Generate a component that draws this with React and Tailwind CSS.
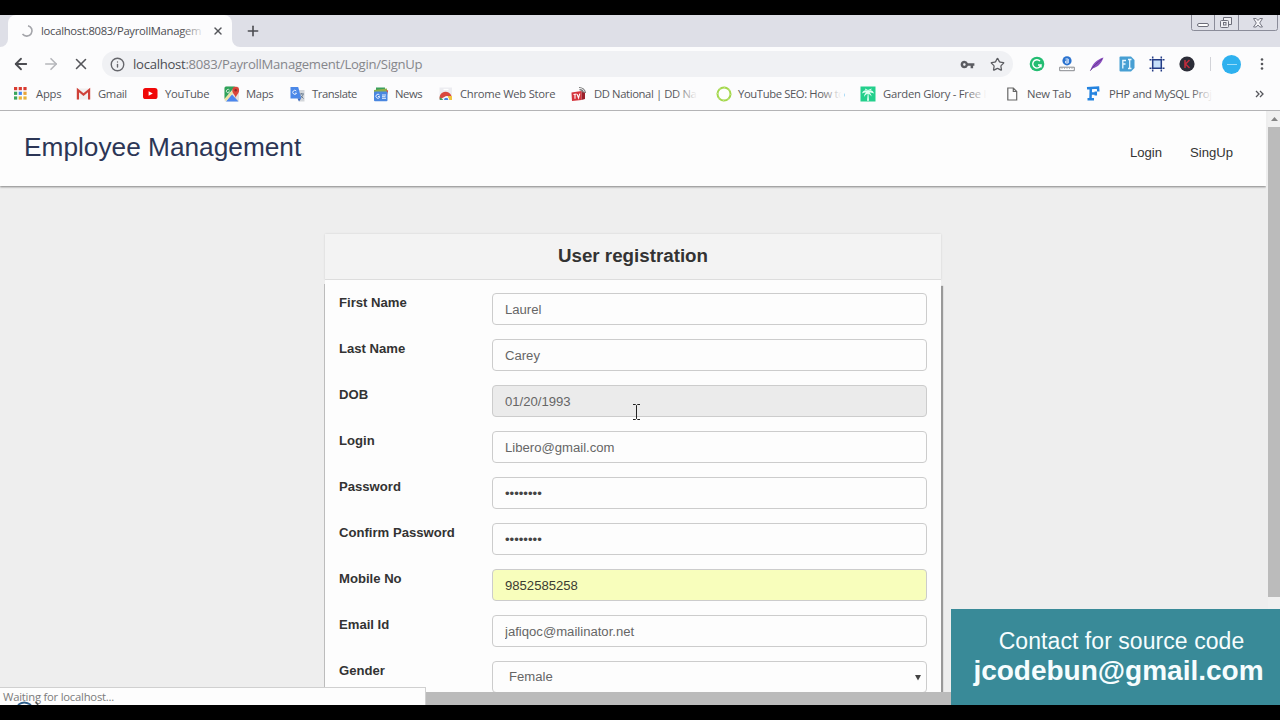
import { ArrowLeft, ArrowRight, X, Plus, Info, Star } from 'lucide-react'
import { MdVpnKey } from 'react-icons/md'

const fields = [
  { label: 'First Name', value: 'Laurel' },
  { label: 'Last Name', value: 'Carey' },
  { label: 'DOB', value: '01/20/1993', tone: 'bg-[#ebebeb] text-[#666]' },
  { label: 'Login', value: 'Libero@gmail.com' },
  { label: 'Password', value: 'libero12', type: 'password', tone: 'bg-[#fdfdfd] text-[#444]' },
  { label: 'Confirm Password', value: 'libero12', type: 'password', tone: 'bg-[#fdfdfd] text-[#444]' },
  { label: 'Mobile No', value: '9852585258', tone: 'bg-[#f8febc] text-[#3c3c32]' },
  { label: 'Email Id', value: 'jafiqoc@mailinator.net' },
]

const appColors = ['#d93b30', '#d93b30', '#d93b30', '#3ba55c', '#4285f4', '#e8a33a', '#3ba55c', '#e8b23a', '#e8b23a']

function AppsIcon() {
  return (
    <svg width="15" height="15" viewBox="0 0 15 15">
      {appColors.map((c, i) => (
        <rect key={i} x={1 + (i % 3) * 4.7} y={1 + Math.floor(i / 3) * 4.7} width="3.2" height="3.2" fill={c} />
      ))}
    </svg>
  )
}

function GmailIcon() {
  return (
    <svg width="15" height="15" viewBox="0 0 15 15">
      <path d="M1 2.5h13v11H1z" fill="#f1efef" />
      <path d="M1.9 13.5V4l5.6 4.6L13.1 4v9.5" fill="none" stroke="#cf4139" strokeWidth="2.2" />
    </svg>
  )
}

function YouTubeIcon() {
  return (
    <svg width="15" height="15" viewBox="0 0 15 15">
      <rect x="0" y="2" width="14.5" height="11" rx="2.6" fill="#f00808" />
      <path d="M5.6 5.2l4.2 2.3-4.2 2.3z" fill="#fff" />
    </svg>
  )
}

function MapsIcon() {
  return (
    <svg width="16" height="16" viewBox="0 0 16 16">
      <rect x="0.5" y="0.5" width="14.5" height="15" rx="1.5" fill="#e4e2dc" />
      <path d="M.5 2A1.5 1.5 0 0 1 2 .5h9L.5 13z" fill="#2fa35a" />
      <path d="M2 15.5L8 8.500l6.500 7z" fill="#4b86ee" />
      <path d="M.5 13L9 4l1.300 1.500L2 15z" fill="#f0e3a0" />
      <path d="M11.700 12C11.500 9 8.300 7.500 8.300 4.200a3.400 3.400 0 0 1 6.800 0C15.100 7.500 12 9 11.700 12z" fill="#d9443a" />
      <circle cx="11.700" cy="4.200" r="1.200" fill="#8c2c25" />
      <path d="M5.500 4.200A1.700 1.700 0 1 0 5.500 6H4" fill="none" stroke="#e9f5ec" strokeWidth=".8" />
    </svg>
  )
}

function TranslateIcon() {
  return (
    <svg width="16" height="16" viewBox="0 0 16 16">
      <path d="M6 4h8.500v11.500H9z" fill="#d3d6da" />
      <path d="M9.500 8h4.500M11.700 7v1M13 8.500c-.5 2-1.800 3-3 3.700M10.500 9.500l3 3" stroke="#6b7d91" strokeWidth="1" fill="none" />
      <path d="M.5 1h7.700l3 11.500H.5z" fill="#4b88e8" />
      <path d="M6.300 5A2 2 0 1 0 6.600 7.200H5" fill="none" stroke="#e8f0fd" strokeWidth="1" />
      <path d="M7.500 12.500H11l-2 3z" fill="#3466c0" />
    </svg>
  )
}

function NewsIcon() {
  return (
    <svg width="16" height="16" viewBox="0 0 16 16">
      <path d="M3 1.500h9v4H3z" fill="#39a05b" />
      <path d="M1 4l13-1.500V7H1z" fill="#8fae4c" />
      <path d="M13.500 4l1.700.5L14 9z" fill="#d9443a" />
      <rect x="1" y="5.500" width="13.500" height="9.700" rx="1" fill="#4a86e0" />
      <path d="M6.500 9A2 2 0 1 0 6.500 11.500V10.500H5M9 9h4M9 10.700h3.500M9 12.300h4" fill="none" stroke="#e6effc" strokeWidth="1" />
    </svg>
  )
}

function WebStoreIcon() {
  return (
    <svg width="15" height="15" viewBox="0 0 15 15">
      <path d="M.5 1.500h12.500V14H.5z" fill="#ececf0" />
      <path d="M4.500 3.500h5" stroke="#fff" strokeWidth="1.300" />
      <path d="M.8 13.500a6 6 0 0 1 11.700-3.500H7z" fill="#d9483e" />
      <path d="M.8 11L4.500 14H.8z" fill="#45a35d" />
      <path d="M9 10h4v4H8.500z" fill="#efc441" />
      <path d="M4.200 14a3 3 0 1 1 6 0z" fill="#fff" />
      <path d="M5 14a2.200 2.200 0 1 1 4.400 0z" fill="#4b83df" />
    </svg>
  )
}

function DDIcon() {
  return (
    <svg width="16" height="16" viewBox="0 0 16 16">
      <path d="M.5 6.500l10-1.500v9L1 15z" fill="#d5343c" />
      <path d="M10.500 5l3.500 1.500V13l-3.500 1z" fill="#991f2a" />
      <path d="M2.500 8.500l3-.4M4 8.400v4.300M6.200 8.200l1.300 3.700 1.300-4.200" stroke="#fff" strokeWidth="1.100" fill="none" />
      <path d="M8 1.500a6.500 6.500 0 0 1 6.500 5.500M8.500 3.600a4 4 0 0 1 4 3" stroke="#777" strokeWidth="1.200" fill="none" />
    </svg>
  )
}

function SeoIcon() {
  return (
    <svg width="16" height="16" viewBox="0 0 16 16">
      <circle cx="8" cy="8" r="6.500" fill="#fefefe" stroke="#a4d84c" strokeWidth="2" />
      <circle cx="8" cy="8" r="6.500" fill="none" stroke="#c4e48c" strokeWidth="2" strokeDasharray="1 4" />
    </svg>
  )
}

function PalmIcon() {
  return (
    <svg width="16" height="16" viewBox="0 0 16 16">
      <rect x="0.5" y="0.5" width="15" height="15" fill="#23cf8c" />
      <path d="M2 7.500C3 4 6 3.500 8 5c2-1.500 5-1 6 2.500-2-1-3-1-4.500-1 1 1 2 2 2 4-1-1.500-2-2.300-3-2.700l.5 7h-2l.7-7C6 8.500 5 9.300 4 11c0-2 .7-3.200 2-4.500-1.500 0-2.500 0-4 1z" fill="#e4fff3" />
      <path d="M5 3l3 1.500L11.500 3" stroke="#e4fff3" strokeWidth="1" fill="none" />
    </svg>
  )
}

function PageIcon() {
  return (
    <svg width="12" height="14" viewBox="0 0 12 14">
      <path d="M.8 1h5.500l3.400 3.500V13H.8zM6.300 1v3.500h3.400" fill="none" stroke="#666" strokeWidth="1.200" />
    </svg>
  )
}

function FreeIcon() {
  return (
    <svg width="14" height="15" viewBox="0 0 14 15">
      <path d="M1 2.300L12 1.500l.3 4M4.800 2.200L4.500 13M1.500 13.200h6.500M5.500 7.500h4.500M9.800 5.500v4" stroke="#2483df" strokeWidth="2.500" fill="none" />
    </svg>
  )
}

const bookmarks = [
  { title: 'Apps', icon: AppsIcon, box: 'w-[63px]', gap: 'w-[23px]', font: 'tracking-[-0.2px]' },
  { title: 'Gmail', icon: GmailIcon, box: 'w-[67px]', gap: 'w-[22px]', font: 'tracking-[-0.35px]' },
  { title: 'YouTube', icon: YouTubeIcon, box: 'w-[81px]', gap: 'w-[22px]', font: 'tracking-[-0.3px]' },
  { title: 'Maps', icon: MapsIcon, box: 'w-[66px]', gap: 'w-[22px]', font: 'tracking-[-0.3px]' },
  { title: 'Translate', icon: TranslateIcon, box: 'w-[83px]', gap: 'w-[22px]', font: 'tracking-[-0.42px]' },
  { title: 'News', icon: NewsIcon, box: 'w-[66px]', gap: 'w-[22px]', font: 'tracking-[-0.4px]' },
  { title: 'Chrome Web Store', icon: WebStoreIcon, box: 'w-[132px]', gap: 'w-[21px]', font: 'tracking-[-0.26px]' },
  { title: 'DD National | DD Na', icon: DDIcon, box: 'w-[145px]', gap: 'w-[23px]', font: 'tracking-[-0.38px]', fade: true },
  { title: 'YouTube SEO: How to', icon: SeoIcon, box: 'w-[144px]', gap: 'w-[22px]', font: 'tracking-[-0.38px]', fade: true },
  { title: 'Garden Glory - Free I', icon: PalmIcon, box: 'w-[147px]', gap: 'w-[23px]', font: 'tracking-[-0.25px]', fade: true },
  { title: 'New Tab', icon: PageIcon, box: 'w-[79px]', gap: 'w-5', font: 'tracking-[-0.25px]' },
  { title: 'PHP and MySQL Proj', icon: FreeIcon, box: 'w-[149px]', gap: 'w-[23px]', font: 'tracking-[-0.3px]', fade: true },
]

function Bookmark({ item }) {
  const Icon = item.icon
  return (
    <div className={`flex h-full shrink-0 items-center ${item.box}`}>
      <div className={`shrink-0 ${item.gap}`}>
        <Icon />
      </div>
      <div className={`relative pt-px whitespace-nowrap ${item.font} ${item.fade ? 'w-[106px]' : ''}`}>
        {item.title}
        {item.fade && (
          <span className="absolute inset-y-0 right-0 w-6 bg-linear-to-r from-transparent to-[#fcfcfd] to-90%" />
        )}
      </div>
    </div>
  )
}

function WindowButtons() {
  return (
    <svg width="89" height="17" viewBox="0 0 89 17" fill="none" stroke="#8b8c99" className="shrink-0">
      <path d="M.5 0v13.500q0 2 2 2h82q2 0 2-2V0M23.500 0v15M47.500 0v15" />
      <rect x="6.500" y="8.500" width="11" height="3" rx="1.500" stroke="#6d6e7a" fill="#fff" />
      <g stroke="#6d6e7a">
        <path d="M32.500 5V2.500h8v7H38" fill="#f0f0f4" />
        <rect x="29.500" y="5.500" width="8" height="7" rx="1" fill="#f0f0f4" />
        <rect x="32.500" y="7.500" width="2.500" height="2.500" />
      </g>
      <path d="M62.500 3.500h2.700l1.800 2 1.800-2h2.700L68.700 8l2.800 4h-2.700L67 10l-1.800 2h-2.700L65.300 8z" stroke="#777884" fill="#f4f4f7" />
    </svg>
  )
}

function TabStrip() {
  return (
    <div className="flex h-8 items-start bg-[#dedfe7]">
      <div className="h-8 w-2 bg-[#fcfcfd]">
        <div className="h-8 rounded-br-lg bg-[#dedfe7]" />
      </div>
      <div className="flex h-8 w-[224px] items-center rounded-t-lg bg-[#fcfcfd] pl-3">
        <svg width="14" height="14" viewBox="0 0 14 14" fill="none" className="mr-[7px] shrink-0">
          <path d="M8 1.700A5.300 5.300 0 1 1 2.500 10" stroke="#a4a5aa" strokeWidth="1.600" />
        </svg>
        <div className="relative w-[164px] whitespace-nowrap text-[11.25px] tracking-[-0.27px] text-[#4c4d52]">
          localhost:8083/PayrollManagem
          <span className="absolute inset-y-0 right-0 w-6 bg-linear-to-r from-transparent to-[#fcfcfd]" />
        </div>
        <X size={12} strokeWidth={2.8} className="ml-[7px] shrink-0 text-[#55565b]" />
      </div>
      <div className="h-8 w-2 bg-[#fcfcfd]">
        <div className="h-8 rounded-bl-lg bg-[#dedfe7]" />
      </div>
      <Plus size={16} strokeWidth={2.4} className="mt-2 ml-[5px] text-[#4b4c51]" />
      <div className="grow" />
      <WindowButtons />
    </div>
  )
}

function Extensions() {
  return (
    <div className="flex items-center">
      <svg width="16" height="16" viewBox="0 0 16 16" className="mr-[14px]">
        <circle cx="8" cy="8" r="7.300" fill="#23bd72" />
        <path d="M11 5A4.200 4.200 0 1 0 12 9H9M12 9v2.500" fill="none" stroke="#fff" strokeWidth="1.400" />
      </svg>
      <svg width="16" height="16" viewBox="0 0 16 16" className="mr-[14px]">
        <circle cx="8" cy="4.800" r="4.600" fill="#2a72ce" />
        <path d="M6.500 3h2.700v4H6.700V5h2.500" fill="none" stroke="#e9f2ff" strokeWidth="1" />
        <path d="M.7 11.200h14.600v3.500H.7z" fill="#fff" stroke="#7b7d82" strokeWidth=".9" />
        <path d="M3 11.500v1.500M5.500 11.500v1.500M8 11.500v1.500M10.500 11.500v1.500M13 11.500v1.500" stroke="#999" strokeWidth=".7" />
      </svg>
      <svg width="16" height="16" viewBox="0 0 16 16" className="mr-[14px]">
        <path d="M1.500 14.500C3 8 8 3.500 14.500 1.500c-1.500 5-5 9.500-11 11z" fill="#8c4fc0" />
        <path d="M1.300 14.700C5 9.500 8 7 13 3" stroke="#5c3489" strokeWidth=".9" fill="none" />
      </svg>
      <svg width="16" height="16" viewBox="0 0 16 16" className="mr-[14px]">
        <path d="M.5 1.500q0-1 1-1H12l3.500 3.500v8L12 15.500H1.500q-1 0-1-1z" fill="#479fd3" />
        <path d="M3.800 12.500V4.500H7M3.800 8H6.500M9 3.500h3.500M10.700 3.500v9M9 12.500h3.500" stroke="#e9f7ff" strokeWidth="1.300" fill="none" />
      </svg>
      <svg width="16" height="16" viewBox="0 0 16 16" className="mr-[14px]">
        <rect x="4" y="4" width="8" height="8" fill="#c6e0fb" />
        <path d="M3.700.5v15M12.300.5v15M.5 3.700h15M.5 12.300h15" stroke="#243c86" strokeWidth="1.500" strokeDasharray="2 .6 9.800 .6 2" fill="none" />
      </svg>
      <svg width="16" height="16" viewBox="0 0 16 16">
        <circle cx="8" cy="8" r="7.600" fill="#2c2d38" />
        <path d="M6 4v8M10.500 4L6.500 8l4 4" stroke="#c42c3c" strokeWidth="1.500" fill="none" />
      </svg>
      <div className="mr-[11px] ml-[15px] h-3.5 w-px bg-[#d2d3d8]" />
      <div className="flex size-[19px] items-center justify-center rounded-full bg-[#2eb1ef]">
        <div className="h-px w-2.5 bg-[#9cdcf9]" />
      </div>
      <svg width="4" height="14" viewBox="0 0 4 14" fill="#55565b" className="ml-[19px]">
        <circle cx="2" cy="2.500" r="1.300" />
        <circle cx="2" cy="7" r="1.300" />
        <circle cx="2" cy="11.500" r="1.300" />
      </svg>
    </div>
  )
}

function Toolbar() {
  return (
    <div className="flex h-[34px] items-center bg-[#fcfcfd] pl-3">
      <ArrowLeft size={18} strokeWidth={2.4} className="text-[#4c4d52]" />
      <ArrowRight size={18} strokeWidth={2.2} className="ml-3 text-[#b5b6bb]" />
      <X size={18} strokeWidth={2.1} className="ml-3 text-[#55565b]" />
      <div className="ml-3 flex h-[26px] w-[911px] items-center rounded-full bg-[#f0f1f4] pl-2">
        <Info size={15} strokeWidth={2.2} className="shrink-0 text-[#66676c]" />
        <div className="ml-2 pt-px text-[13.125px] tracking-[-0.28px] text-[#85868b]">
          <span className="text-[#4c4d52]">localhost</span>:8083/PayrollManagement/Login/SignUp
        </div>
        <div className="grow" />
        <MdVpnKey size={15} className="mr-[15px] text-[#5b5c61]" />
        <Star size={15} strokeWidth={2} className="mr-2 text-[#5b5c61]" />
      </div>
      <div className="w-4" />
      <Extensions />
    </div>
  )
}

function Field({ field }) {
  return (
    <div className="flex h-[46px]">
      <label className="w-[153px] pt-px leading-[18px] font-bold text-[#333]">{field.label}</label>
      <input
        type={field.type || 'text'}
        defaultValue={field.value}
        className={`h-8 w-[435px] rounded-[4px] border border-[#ccc] px-3 outline-none ${field.tone || 'bg-[#fdfdfd] text-[#666]'}`}
      />
    </div>
  )
}

function RegistrationPage() {
  return (
    <div className="flex w-[1266px] flex-col overflow-hidden bg-[#eee] font-['Liberation_Sans',Arial,sans-serif] text-[13.125px]">
      <header className="flex h-[75px] shrink-0 justify-between bg-[#fdfdfd] pr-[33px] pl-6 shadow-[0_1px_2px_rgba(0,0,0,0.45)]">
        <h1 className="pt-[18px] text-[26.25px] leading-9 text-[#2c3656]">Employee Management</h1>
        <nav className="flex gap-7 pt-[33px] leading-[18px] text-[#333]">
          <a>Login</a>
          <a>SingUp</a>
        </nav>
      </header>
      <div className="mt-12 ml-[325px] w-[616px]">
        <h3 className="h-[46px] border-b border-[#ddd] bg-[#f3f3f3] text-center text-[18.75px] leading-[44px] font-bold text-[#333] shadow-[0_0_2px_rgba(0,0,0,0.12)]">
          User registration
        </h3>
        <form className="h-[480px] bg-[#fdfdfd] px-[14px] pt-[13px] shadow-[2px_6px_1px_#999,-1px_4px_0_#bcbcbc]">
          {fields.map((field) => (
            <Field key={field.label} field={field} />
          ))}
          <div className="flex h-[46px]">
            <label className="w-[153px] pt-px leading-[18px] font-bold text-[#333]">Gender</label>
            <div className="flex h-8 w-[435px] items-center justify-between rounded-[4px] border border-[#ccc] pr-[5px] pl-4 text-[#666]">
              Female
              <svg width="6" height="7" viewBox="0 0 6 7">
                <path d="M0 1h6L3 6.500z" fill="#444" />
              </svg>
            </div>
          </div>
        </form>
      </div>
    </div>
  )
}

function ScrollBar() {
  return (
    <div className="ml-0.5 w-3 bg-[#f0f0f0]">
      <div className="flex h-4 items-center justify-center">
        <svg width="7" height="4" viewBox="0 0 7 4">
          <path d="M3.500 0L7 4H0z" fill="#858585" />
        </svg>
      </div>
      <div className="h-[470px] bg-[#bbb]" />
    </div>
  )
}

export default function App() {
  return (
    <div className="relative h-[720px] w-[1280px] overflow-hidden bg-black py-[15px] font-['Open_Sans','Noto_Sans',sans-serif]">
      <TabStrip />
      <Toolbar />
      <div className="flex h-[30px] items-center border-b border-[#b4b4b6] bg-[#fcfcfd] pb-1 pl-[13px] text-[11.25px] text-[#55565b]">
        {bookmarks.map((item) => (
          <Bookmark key={item.title} item={item} />
        ))}
        <svg width="9" height="8" viewBox="0 0 9 8" className="ml-5" fill="none" stroke="#55565b" strokeWidth="1.300">
          <path d="M1 1l3 3-3 3M5 1l3 3-3 3" />
        </svg>
      </div>
      <div className="flex h-[581px] bg-[#eee]">
        <RegistrationPage />
        <ScrollBar />
      </div>
      <div className="h-[13px] bg-[#bbb]" />

      {/* loading status bubble */}
      <div className="absolute top-[687px] left-0 h-[18px] w-[426px] overflow-hidden border-t border-r border-[#d0d0d0] bg-[#fdfdfd] pl-[3px] text-[11.25px] leading-[18px] tracking-[-0.22px] text-[#7b7b7b]">
        Waiting for localhost...
        <svg width="24" height="4" viewBox="0 0 24 4" className="absolute bottom-0 left-[17px]" fill="none">
          <path d="M1 4Q7 -1 14 4" stroke="#2f5f8c" strokeWidth="1.800" />
          <path d="M19 1l2 3" stroke="#555" strokeWidth="1.500" />
        </svg>
      </div>

      {/* contact banner */}
      <div className="absolute top-[609px] left-[951px] h-24 w-[329px] bg-[#398a98] pt-[17px] pl-[13px] text-center font-['Liberation_Sans',Arial,sans-serif] whitespace-nowrap text-[#f6fdfe]">
        <div className="-ml-px text-[23px] leading-[30px] tracking-[0.06px]">Contact for source code</div>
        <div className="-ml-[7px] text-[28px] leading-[30px] font-bold">jcodebun@gmail.com</div>
      </div>

      {/* text cursor */}
      <svg width="9" height="16" viewBox="0 0 9 16" className="absolute top-[404px] left-[632px]" fill="none" stroke="#222">
        <path d="M1 .5h2.500l1 1 1-1H8M4.500 1.500v13M1 15.500h2.500l1-1 1 1H8" />
      </svg>
    </div>
  )
}
